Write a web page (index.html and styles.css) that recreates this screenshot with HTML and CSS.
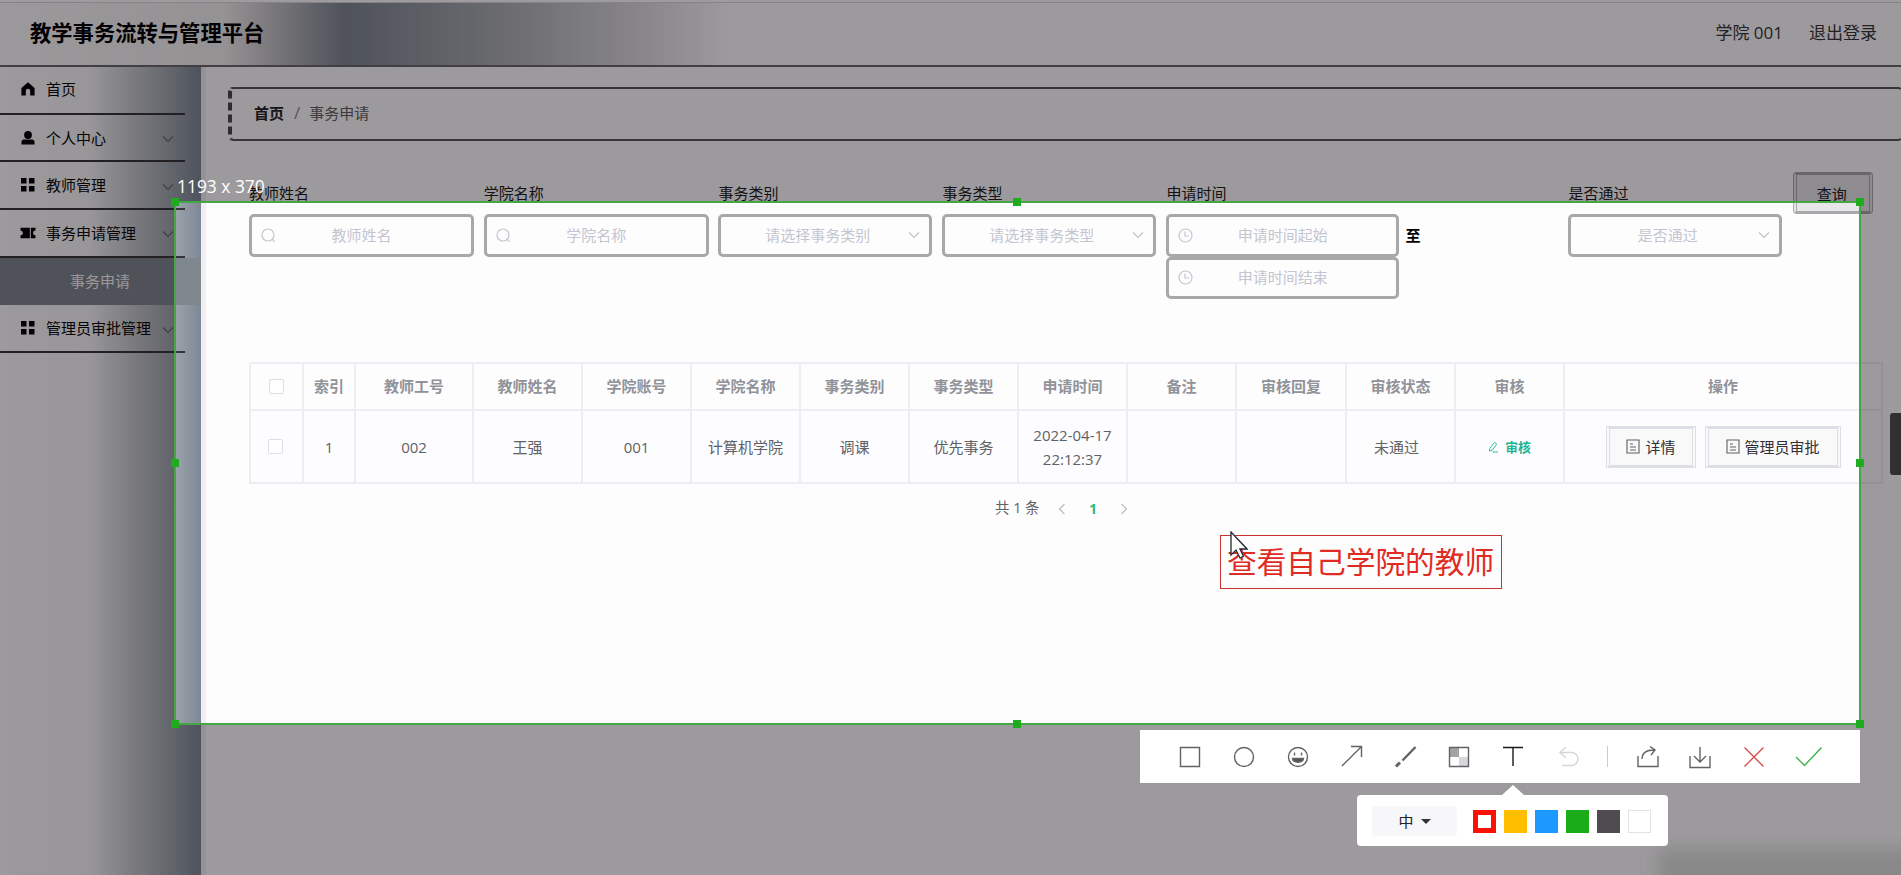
FILE: index.html
```html
<!DOCTYPE html>
<html lang="zh-CN">
<head>
<meta charset="utf-8">
<title>教学事务流转与管理平台</title>
<link rel="stylesheet" href="styles.css">
</head>
<body>
<svg class="defs" width="0" height="0">
  <symbol id="chev" viewBox="0 0 12 12"><path d="M1 3.5l5 5 5-5" fill="none" stroke="currentColor" stroke-width="1.2"/></symbol>
  <symbol id="search" viewBox="0 0 15 15"><path d="M11.6 11.6l2 2M13 7A6 6 0 1 1 1 7a6 6 0 0 1 12 0z" fill="none" stroke="currentColor" stroke-width="1.2"/></symbol>
  <symbol id="clock" viewBox="0 0 15 15"><path d="M14 7.5a6.500 6.500 0 1 1-13 0 6.500 6.500 0 0 1 13 0zM7 3.500V8h4" fill="none" stroke="currentColor" stroke-width="1.2"/></symbol>
  <symbol id="grid" viewBox="0 0 14 14"><path d="M0 0h5.500v5.500H0zM8 0h5.500v5.500H8zM0 8h5.500v5.500H0zM8 8h5.500v5.500H8z" fill="currentColor"/></symbol>
  <symbol id="doc" viewBox="0 0 14 15"><path d="M1 1h12v13H1zM4 5h3M4 8h6M4 11h6" fill="none" stroke="currentColor" stroke-width="1.1"/></symbol>
</svg>
<div class="app">
  <header class="header">
    <h1 class="title">教学事务流转与管理平台</h1>
    <div class="user"><span>学院 001</span><span>退出登录</span></div>
  </header>
  <div class="body">
    <nav class="side">
      <div class="item"><svg class="ico" viewBox="0 0 14 14"><path d="M7 .3L13.600 6v7.500H9.200V9a2.200 2.200 0 0 0-4.400 0v4.500H.4V6z"/></svg><span>首页</span></div>
      <div class="item"><svg class="ico" viewBox="0 0 14 14"><circle cx="7" cy="4" r="3.900"/><path d="M.5 13.500V11a2.500 2.500 0 0 1 2.500-2.500h8a2.500 2.500 0 0 1 2.500 2.500v2.500z"/></svg><span>个人中心</span><svg class="chev"><use href="#chev"/></svg></div>
      <div class="item"><svg class="ico"><use href="#grid"/></svg><span>教师管理</span><svg class="chev"><use href="#chev"/></svg></div>
      <div class="item"><svg class="ico" viewBox="0 0 14 14"><path d="M-.5 1.800h9.300v10.400H-.5V9.500a2.500 2.500 0 0 0 0-5zM9.800 1.800h4.700v2.700a2.500 2.500 0 0 0 0 5v2.700H9.800z"/></svg><span>事务申请管理</span><svg class="chev"><use href="#chev"/></svg></div>
      <div class="sub">事务申请</div>
      <div class="item"><svg class="ico"><use href="#grid"/></svg><span>管理员审批管理</span><svg class="chev"><use href="#chev"/></svg></div>
    </nav>
    <main class="main">
      <div class="crumb"><b>首页</b><i>/</i><span>事务申请</span></div>
      <form class="filters">
        <div class="field text"><label>教师姓名</label><div class="box"><svg class="pre"><use href="#search"/></svg><span>教师姓名</span></div></div>
        <div class="field text"><label>学院名称</label><div class="box"><svg class="pre"><use href="#search"/></svg><span>学院名称</span></div></div>
        <div class="field select"><label>事务类别</label><div class="box"><span>请选择事务类别</span><svg class="chev"><use href="#chev"/></svg></div></div>
        <div class="field select"><label>事务类型</label><div class="box"><span>请选择事务类型</span><svg class="chev"><use href="#chev"/></svg></div></div>
        <div class="field dates"><label>申请时间</label>
          <div class="range"><div class="box"><svg class="pre"><use href="#clock"/></svg><span>申请时间起始</span></div><b>至</b></div>
          <div class="box"><svg class="pre"><use href="#clock"/></svg><span>申请时间结束</span></div>
        </div>
        <div class="field select"><label>是否通过</label><div class="box"><span>是否通过</span><svg class="chev"><use href="#chev"/></svg></div></div>
        <button type="button" class="query">查询</button>
      </form>
      <div class="table">
        <div class="row head"><div><i class="check"></i></div><div>索引</div><div>教师工号</div><div>教师姓名</div><div>学院账号</div><div>学院名称</div><div>事务类别</div><div>事务类型</div><div>申请时间</div><div>备注</div><div>审核回复</div><div>审核状态</div><div>审核</div><div>操作</div></div>
        <div class="row data"><div><i class="check"></i></div><div>1</div><div>002</div><div>王强</div><div>001</div><div>计算机学院</div><div>调课</div><div>优先事务</div><div>2022-04-17<br>22:12:37</div><div></div><div></div><div class="status">未通过</div>
          <div class="audit"><svg viewBox="0 0 12 13"><path d="M2 8l5-6.500 2.500 1.800L4.500 10 1.500 11zM5 12h6" fill="none" stroke="currentColor"/></svg>审核</div>
          <div class="ops"><button type="button"><svg><use href="#doc"/></svg>详情</button><button type="button"><svg><use href="#doc"/></svg>管理员审批</button></div></div>
      </div>
      <div class="pager"><span>共 1 条</span><svg class="prev"><use href="#chev"/></svg><b>1</b><svg class="next"><use href="#chev"/></svg></div>
    </main>
  </div>
</div>
<div class="corner"></div>

<div class="selection">
  <i class="h tl"></i><i class="h tc"></i><i class="h tr"></i><i class="h ml"></i><i class="h mr"></i><i class="h bl"></i><i class="h bc"></i><i class="h br"></i>
</div>
<div class="size">1193 x 370</div>
<div class="note">查看自己学院的教师</div>
<svg class="cursor" viewBox="0 0 18 28"><path d="M1 1v23l5-5 4 8 3.500-1.700-3.600-7.300H17z" fill="#fff" stroke="#222633" stroke-width="1.300"/></svg>
<div class="drawer"></div>

<div class="tools">
  <svg viewBox="0 0 26 26"><path d="M3.500 3.500h19v19h-19z"/></svg>
  <svg viewBox="0 0 26 26"><circle cx="13" cy="13" r="9.500"/></svg>
  <svg viewBox="0 0 26 26"><circle cx="13" cy="13" r="9.500"/><path d="M9.500 8.500v3M16.500 8.500v3"/><path d="M7.500 14.500h11c-.5 5-10.500 5-11 0z" fill="#555"/></svg>
  <svg viewBox="0 0 26 26"><path d="M3 22L22.500 2.500M12 2.500h10.500V13"/></svg>
  <svg viewBox="0 0 26 26"><path d="M9.500 16.500L22.500 3" stroke-width="2.400"/><path d="M3 22.500l4-4" stroke-width="3"/></svg>
  <svg viewBox="0 0 26 26"><path d="M4 4h9v9H4z" fill="#a5a3a5" stroke="none"/><path d="M13 13h9v9h-9z" fill="#d8d6d8" stroke="none"/><path d="M3.500 3.500h19v19h-19z"/></svg>
  <svg viewBox="0 0 26 26" class="t"><path d="M3 3.500h20M13 3.500V22"/></svg>
  <svg viewBox="0 0 26 26" class="undo"><path d="M10 3L4 8.500l6 5.500M4 8.500h11.500a6.500 6.500 0 0 1 0 13H6"/></svg>
  <i class="sep"></i>
  <svg viewBox="0 0 26 26"><path d="M3 12v10.500h20V12M7 15c0-6 5-9 12.500-9M15 2.500L20 6l-4 5"/></svg>
  <svg viewBox="0 0 26 26"><path d="M3 12v11.500h20V12M13 3v15M7 12l6 6 6-6"/></svg>
  <svg viewBox="0 0 26 26" class="no"><path d="M3.500 3.500l19 19M22.500 3.500l-19 19"/></svg>
  <svg viewBox="0 0 26 26" class="ok"><path d="M0 13l8.500 8.500L25.500 3.500"/></svg>
</div>
<div class="palette"><span class="font">中<i></i></span><i class="sw red"></i><i class="sw yellow"></i><i class="sw blue"></i><i class="sw green"></i><i class="sw dark"></i><i class="sw white"></i></div>
</body>
</html>
```
FILE: styles.css
```css
* { box-sizing: border-box; }
body { margin: 0; width: 1901px; height: 875px; overflow: hidden; position: relative; background: #fefdfe; color: #222; font: 15px/20px "Open Sans", "Noto Sans CJK SC", sans-serif; }
i { font-style: normal; }
.defs { position: absolute; }
.app { height: 875px; display: flex; flex-direction: column; }
.header { height: 67px; flex: none; display: flex; align-items: center; justify-content: space-between; padding: 0 24px 5px 30px; border-top: 2px solid #fff; border-bottom: 2px solid #68686a;
  background: linear-gradient(90deg, #fdfcfd 0, #f0f0ef 225px, #c8c8c8 270px, #7e8793 345px, #a6abaf 480px, #d5d5d5 620px, #fefdfe 730px); box-shadow: inset 0 1px #d8d8d8; }
.title { margin: 4px 0 0; font-size: 21.300px; line-height: 30px; font-weight: 700; color: #000; white-space: nowrap; }
.user { display: flex; gap: 26px; font-size: 17px; margin-top: 3px; color: #37373b; }
.body { flex: 1; display: flex; min-height: 0; }

.side { width: 201px; flex: none; background: linear-gradient(90deg, #fefdfe 0, #f7f7f7 90px, #dedfdf 112px, #aeb4ba 158px, #7f8996 200px); font-size: 15px; color: #080808; }
.item { width: 185px; height: 47.700px; border-bottom: 2px solid #353537; padding: 0 11px 0 21px; display: flex; align-items: center; }
.item span { flex: 1; margin-left: 11px; white-space: nowrap; }
.item:first-child { padding-bottom: 2px; }
.ico { width: 14px; height: 14px; flex: none; overflow: visible; fill: #000; color: #000; }
.chev { width: 12px; height: 12px; flex: none; color: #66696f; }
.item .chev { margin-top: 3px; }
.sub { height: 47.500px; background: #7f878f; color: #fbf8fa; line-height: 46px; padding-left: 70px; }

.main { flex: 1; min-width: 0; border-left: 5px solid #f2eff4; padding: 20px 0 0 22px; }
.crumb { width: 1675px; height: 54px; border: 2px solid #58585a; border-left: 4px dashed #49494b; border-right: 2px dashed #49494b; border-radius: 5px; display: flex; align-items: center; padding: 0 0 3px 22px; }
.crumb b { color: #222; }
.crumb i { margin: 0 9px 0 10px; color: #898c93; font-size: 17px; }
.crumb span { color: #606064; }

.filters { display: flex; margin: 42px 0 0 21px; height: 179px; align-items: flex-start; }
.field { margin-right: 10px; }
.field label { display: block; height: 31px; line-height: 20px; color: #1c1c20; }
.text { width: 225px; }
.select { width: 214px; }
.dates { width: 392px; }
.dates .box { width: 233px; }
.text { margin-right: 9.700px; }
.box { height: 42.500px; border: 3px solid #a8a8aa; border-radius: 5px; display: flex; align-items: center; padding: 0 9px; color: #c3c5d0; }
.box span { flex: 1; text-align: center; white-space: nowrap; padding-bottom: 1px; }
.box .chev { color: #c0c3cc; }
.select .box span { padding-right: 3px; }
.box .pre + span { padding-right: 15px; }
.pre { width: 15px; height: 15px; flex: none; }
.range { display: flex; align-items: center; gap: 6px; color: #000; }
.query { width: 80px; height: 42px; margin: -11px 0 0 1px; border: 3px solid #a8a8aa; border-left: 4px double #a8a8aa; border-right: 4px double #a8a8aa; border-radius: 4px; background: #e8e6e8; color: #202024; font: inherit; padding: 2px 3px 0 0; }

.table { width: 1634px; margin-left: 21px; border-top: 2px solid #eeedf4; border-left: 2px solid #eeedf4; color: #606266; }
.row { display: grid; grid-template-columns: 53px 52px 118px 109px 109px 109px 109px 109px 109px 109px 110px 109px 109px 318px; }
.row > div { border-right: 2px solid #eeedf4; border-bottom: 2px solid #eeedf4; display: flex; align-items: center; justify-content: center; text-align: center; }
.head { height: 47px; font-weight: 700; color: #909399; }
.head > div { padding-bottom: 1px; }
.data { height: 73px; line-height: 24px; background: #fdfcfe; }
.row .status { padding-right: 8px; }
.check { width: 15px; height: 15px; border: 1px solid #dcdfe6; border-radius: 2px; background: #fff; }
.data .check { margin-right: 3px; }
.row .audit { color: #20b595; font-size: 12.800px; font-weight: 700; gap: 6px; }
.audit svg { width: 11px; height: 12px; }
.row .ops { gap: 9px; padding-left: 1px; }
.ops button { height: 42px; border: 3px solid #dcdfe6; border-left: 4px double #dcdfe6; border-right: 4px double #dcdfe6; background: #f9f9f9; color: #303035; font: inherit; padding: 0 16px; display: flex; align-items: center; gap: 5px; white-space: nowrap; }
.ops button + button { padding: 0 17px; }
.ops svg { width: 14px; height: 15px; color: #606066; }
.pager { display: flex; align-items: center; margin: 14px 0 0 767px; height: 20px; color: #606266; font-size: 14.400px; }
.pager span { width: 46px; white-space: nowrap; }
.pager svg { width: 12px; height: 12px; color: #b8bbc4; margin-top: 2px; }
.pager b { width: 50px; text-align: center; color: #2dbb86; margin-top: 2px; }
.prev { transform: rotate(90deg); margin-left: 15px; }
.next { transform: rotate(-90deg); }
.corner { position: absolute; left: 1658px; top: 848px; width: 270px; height: 50px; background: #dfe2df; filter: blur(8px); }

/* Capture overlay */
.selection { position: absolute; left: 174px; top: 201px; width: 1687px; height: 524px; border: 2px solid #43a843; box-shadow: 0 0 0 2000px rgba(5, 0, 4, .392); }
.h { position: absolute; width: 8px; height: 8px; margin: -5px; background: #1eab1e; }
.tl, .ml, .bl { left: 0; }
.tc, .bc { left: 50%; }
.tr, .mr, .br { left: 100%; }
.tl, .tc, .tr { top: 0; }
.ml, .mr { top: 50%; margin-top: -4px; }
.bl, .bc, .br { top: 100%; margin-top: -3px; }
.tr, .mr, .br { margin-left: -3px; }
.size { position: absolute; left: 177px; top: 176px; font-size: 17.400px; color: #fff; white-space: nowrap; }
.note { position: absolute; left: 1220px; top: 535px; width: 282px; height: 54px; border: 1.500px solid #c93030; color: #e02b22; font-size: 29.700px; line-height: 52px; padding-left: 6px; white-space: nowrap; }
.cursor { position: absolute; left: 1230px; top: 531px; width: 18px; height: 28px; }
.drawer { position: absolute; right: 0; top: 413px; width: 11px; height: 62px; background: #303030; border-radius: 3px 0 0 3px; }
.tools { position: absolute; left: 1140px; top: 730px; width: 720px; height: 53px; background: #fff; display: flex; align-items: center; padding-left: 37px; gap: 27.900px; }
.tools svg { width: 26px; height: 26px; flex: none; fill: none; stroke: #646266; stroke-width: 1.400; }
.tools .t { stroke: #1b1b1d; }
.tools .undo { stroke: #d8d4da; margin-left: 2px; }
.sep { width: 1px; height: 21px; background: #ccc; margin-left: -3px; }
.sep + svg { margin-left: -1px; }
.sep + svg + svg { margin-left: -1.500px; }
.tools .no { stroke: #d94b4b; }
.tools .ok { stroke: #3eb249; overflow: visible; margin-left: 1px; }
.palette { position: absolute; left: 1357px; top: 795px; width: 311px; height: 51px; background: #fff; border-radius: 4px; display: flex; align-items: center; gap: 8px; padding: 1px 0 0 15px; }
.palette::before { content: ""; position: absolute; left: 145px; top: -10px; border: 11px solid transparent; border-top: 0; border-bottom: 10px solid #fff; }
.font { width: 85px; height: 30px; margin-right: 8px; border-radius: 4px; background: #f7f6f9; color: #222; display: flex; align-items: center; justify-content: center; gap: 7px; }
.font i { border: 5px solid transparent; border-top-color: #333; border-bottom: 0; }
.sw { width: 23px; height: 23px; flex: none; }
.red { border: 5.500px solid #fc1205; }
.yellow { background: #ffbe00; }
.blue { background: #1b99ff; }
.green { background: #1aad19; }
.dark { background: #4e4c4f; }
.white { border: 1px solid #e2e1e4; }
```
